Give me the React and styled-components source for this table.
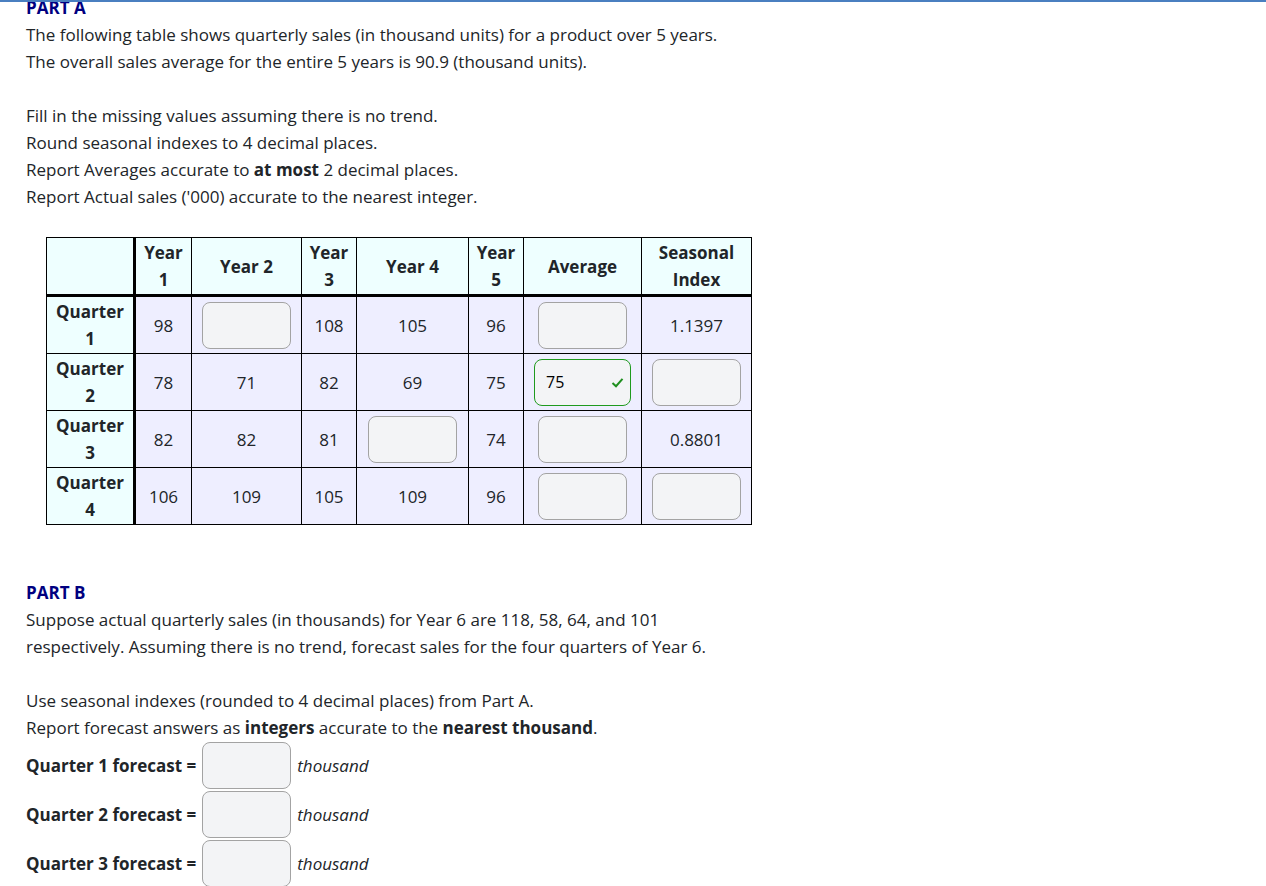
import React from 'react'
import styled, { createGlobalStyle } from 'styled-components'

const Global = createGlobalStyle`
  html, body { margin: 0; padding: 0; background: #fff; }
  body {
    font-family: "Open Sans", "Noto Sans", sans-serif;
    font-size: 17px;
    line-height: 27px;
    color: #212529;
    overflow: hidden;
  }
`

const Page = styled.div`
  border-top: 2px solid #4a7fc0;
  padding: 0 26px;
  height: 884px;
  overflow: hidden;
`

const Inner = styled.div`
  margin-top: -8px;
`

const PartTitle = styled.div`
  color: #000080;
  font-weight: 700;
`

const Para = styled.p`
  margin: 0 0 27px 0;
`

const Grid = styled.table`
  border-collapse: collapse;
  margin: 0 0 0 20px;
  border: 1px solid #000;
  font-size: 17px;
  line-height: 27px;
`

const Th = styled.th`
  background: #eeffff;
  border: 1px solid #000;
  border-bottom: 3px solid #000;
  width: ${p => p.$w}px;
  height: 56px;
  padding: 0;
  text-align: center;
  font-weight: 700;
  ${p => p.$first && 'border-right: 3px solid #000;'}
`

const RowHead = styled.th`
  background: #eeffff;
  border: 1px solid #000;
  border-right: 3px solid #000;
  height: 56px;
  padding: 0;
  font-weight: 700;
  text-align: center;
`

const Td = styled.td`
  background: #eeeeff;
  border: 1px solid #000;
  padding: 0;
  text-align: center;
  height: 56px;
`

const Box = styled.div`
  box-sizing: border-box;
  width: ${p => (p.$wide ? 97 : 89)}px;
  height: 47px;
  margin: ${p => (p.$inline ? '0' : '0 auto')};
  border: 1px solid ${p => (p.$ok ? '#1f9a1f' : '#a3a3a3')};
  border-radius: 8px;
  background: #f3f4f6;
  display: flex;
  align-items: center;
  justify-content: space-between;
  padding: 0 6px 0 11px;
  font-size: 16px;
  color: #000;
`

const Spacer = styled.div`
  height: 54px;
`

const FRow = styled.div`
  display: flex;
  align-items: center;
  gap: 6px;
  height: 49px;
  font-weight: 700;
`

const Unit = styled.span`
  font-style: italic;
  font-weight: 400;
`

const Check = () => (
  <svg width="13" height="11" viewBox="0 0 13 11">
    <path d="M1.5 6 L5 9.2 L11.5 1.8" fill="none" stroke="#1f8f1f" strokeWidth="2" />
  </svg>
)

const cols = [
  { w: 86, label: '' },
  { w: 55, label: <>Year<br />1</> },
  { w: 109, label: 'Year 2' },
  { w: 54, label: <>Year<br />3</> },
  { w: 111, label: 'Year 4' },
  { w: 54, label: <>Year<br />5</> },
  { w: 117, label: 'Average' },
  { w: 109, label: <>Seasonal<br />Index</> },
]

const rows = [
  ['98', null, '108', '105', '96', null, '1.1397'],
  ['78', '71', '82', '69', '75', 'ok', null],
  ['82', '82', '81', null, '74', null, '0.8801'],
  ['106', '109', '105', '109', '96', null, null],
]

export default function App() {
  return (
    <Page>
      <Global />
      <Inner>
        <PartTitle>PART A</PartTitle>
        <Para>
          The following table shows quarterly sales (in thousand units) for a product over 5 years.<br />
          The overall sales average for the entire 5 years is 90.9 (thousand units).
        </Para>
        <Para>
          Fill in the missing values assuming there is no trend.<br />
          Round seasonal indexes to 4 decimal places.<br />
          Report Averages accurate to <b>at most</b> 2 decimal places.<br />
          Report Actual sales ('000) accurate to the nearest integer.
        </Para>
        <Grid>
          <thead>
            <tr>
              {cols.map((c, i) => (
                <Th key={i} $w={c.w} $first={i === 0}>{c.label}</Th>
              ))}
            </tr>
          </thead>
          <tbody>
            {rows.map((r, ri) => (
              <tr key={ri}>
                <RowHead>Quarter<br />{ri + 1}</RowHead>
                {r.map((v, ci) => (
                  <Td key={ci}>
                    {v === null ? <Box /> : v === 'ok' ? <Box $ok $wide><span>75</span><Check /></Box> : v}
                  </Td>
                ))}
              </tr>
            ))}
          </tbody>
        </Grid>
        <Spacer />
        <PartTitle>PART B</PartTitle>
        <Para>
          Suppose actual quarterly sales (in thousands) for Year 6 are 118, 58, 64, and 101<br />
          respectively. Assuming there is no trend, forecast sales for the four quarters of Year 6.
        </Para>
        <div>
          Use seasonal indexes (rounded to 4 decimal places) from Part A.<br />
          Report forecast answers as <b>integers</b> accurate to the <b>nearest thousand</b>.
        </div>
        {[1, 2, 3].map(n => (
          <FRow key={n}>
            <span>Quarter {n} forecast =</span>
            <Box $inline />
            <Unit>thousand</Unit>
          </FRow>
        ))}
      </Inner>
    </Page>
  )
}
